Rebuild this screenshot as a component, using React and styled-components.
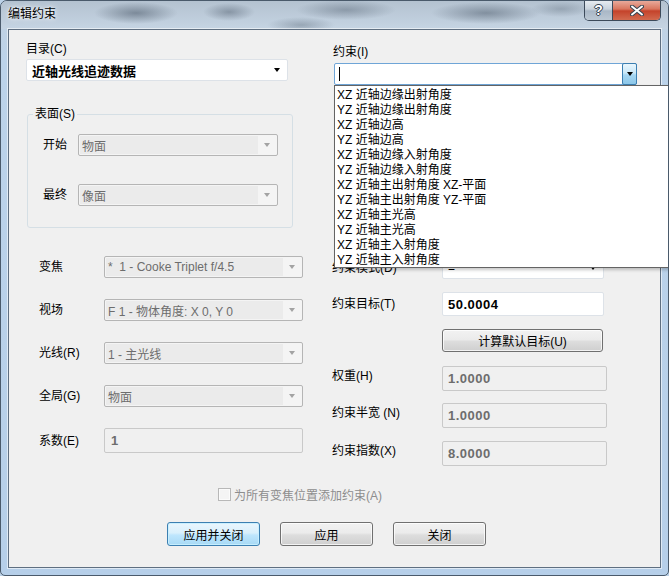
import React from 'react';
import styled, { createGlobalStyle } from 'styled-components';

const uiFont = `"Liberation Sans", "Noto Sans CJK SC", sans-serif`;

const GlobalStyle = createGlobalStyle`
  html, body {
    margin: 0;
    padding: 0;
    background: #bcd2e8;
  }
  body {
    font-family: ${uiFont};
    font-size: 12px;
  }
`;

// window chrome
const Frame = styled.div`
  width: 669px;
  height: 576px;
  box-sizing: border-box;
  border: 1px solid #4a5a6b;
  border-radius: 7px 7px 5px 5px;
  overflow: hidden;
  display: flex;
  flex-direction: column;
  background: linear-gradient(180deg, #c3d1df 0, #bcd3ea 60px, #b6cfe9 100%);
`;

const TitleBar = styled.div`
  flex: none;
  height: 28px;
  padding: 0 7px;
  display: flex;
  justify-content: space-between;
  align-items: flex-start;
  background:
    radial-gradient(42px 11px at 135px 12px, rgba(72, 86, 102, 0.55), transparent),
    radial-gradient(26px 9px at 228px 11px, rgba(72, 86, 102, 0.45), transparent),
    radial-gradient(50px 10px at 345px 9px, rgba(72, 86, 102, 0.4), transparent),
    radial-gradient(34px 8px at 300px 24px, rgba(72, 86, 102, 0.35), transparent),
    radial-gradient(55px 11px at 485px 12px, rgba(72, 86, 102, 0.5), transparent),
    radial-gradient(30px 8px at 560px 8px, rgba(72, 86, 102, 0.3), transparent),
    linear-gradient(180deg, #b4c2d0, #c5d4e3);
`;

const Title = styled.div`
  padding-top: 6px;
  line-height: 14px;
  font-size: 12px;
  color: #000;
  text-shadow: 0 0 6px rgba(255, 255, 255, 0.95), 0 0 3px rgba(255, 255, 255, 0.9);
`;

const CaptionGroup = styled.div`
  display: flex;
  margin-top: -1px;
  border: 1px solid #3c4a5a;
  border-top: none;
  border-radius: 0 0 5px 5px;
  overflow: hidden;
`;

const CaptionButton = styled.div`
  width: ${p => p.$w}px;
  height: 20px;
  box-sizing: border-box;
  display: flex;
  align-items: center;
  justify-content: center;
  border-left: ${p => (p.$close ? '1px solid #3c4a5a' : 'none')};
  background: ${p =>
    p.$close
      ? 'linear-gradient(180deg, #eab0a2 0, #d9765f 45%, #c4432b 55%, #d26a4f 100%)'
      : 'linear-gradient(180deg, #e9eef3 0, #c9d3dd 45%, #a9b7c6 55%, #bcc8d4 100%)'};
  color: #fff;
  font-weight: bold;
  font-size: 14px;
  text-shadow: 0 0 1px #2c3a48, 1px 0 0 #3a4856, -1px 0 0 #3a4856, 0 1px 0 #3a4856, 0 -1px 0 #3a4856;
`;

const Client = styled.div`
  position: relative;
  flex: 1;
  margin: 0 7px 7px;
  background: #f0f0f0;
  border: 1px solid #5f6f81;
  box-shadow: 0 0 0 1px rgba(255, 255, 255, 0.55);
  font-family: ${uiFont};
  font-size: 12px;
  color: #000;
`;

// layout
const Columns = styled.div`
  display: flex;
  align-items: flex-start;
  padding-left: 17px;
`;

const LeftCol = styled.div`
  width: 279px;
  display: flex;
  flex-direction: column;
`;

const RightCol = styled.div`
  width: 306px;
  margin-left: 27px;
  display: flex;
  flex-direction: column;
`;

const Caption = styled.div`
  line-height: 14px;
  margin-top: ${p => p.$mt || 0}px;
  margin-left: ${p => p.$ml || 0}px;
`;

const Row = styled.div`
  display: flex;
  align-items: ${p => (p.$top ? 'flex-start' : 'center')};
  margin-top: ${p => p.$mt || 0}px;
  padding-left: ${p => p.$pl || 0}px;
`;

const RowLabel = styled.span`
  flex: none;
  width: ${p => p.$w}px;
  line-height: ${p => (p.$top ? 20 : 14)}px;
  white-space: nowrap;
`;

const RowStack = styled.div`
  display: flex;
  flex-direction: column;
  gap: 21px;
  margin-top: 28px;
`;

const GroupBox = styled.div`
  position: relative;
  box-sizing: border-box;
  width: 266px;
  height: 114px;
  margin: 33px 0 0 1px;
  padding: 19px 0 0 15px;
  border: 1px solid #d5dfe5;
  border-radius: 3px;
  display: flex;
  flex-direction: column;
  gap: 28px;
`;

const Legend = styled.span`
  position: absolute;
  left: 5px;
  top: -8px;
  padding: 0 2px;
  line-height: 14px;
  background: #f0f0f0;
`;

// combo boxes
const ComboShell = styled.div`
  box-sizing: border-box;
  width: ${p => p.$w}px;
  height: 22px;
  margin-left: ${p => p.$ml || 0}px;
  padding: 1px;
  display: flex;
  border: 1px solid ${p => (p.$disabled ? '#b5b5b5' : p.$focus ? '#6fa5d7' : '#dde2e8')};
  border-radius: 2px;
  background: ${p => (p.$disabled ? '#f4f4f4' : '#fff')};
`;

const ComboText = styled.div`
  flex: 1;
  display: flex;
  align-items: center;
  padding-left: ${p => p.$pl ?? 2}px;
  background: ${p => (p.$disabled ? '#ebebeb' : 'transparent')};
  color: ${p => (p.$disabled ? '#6d6d6d' : '#000')};
  font-weight: ${p => (p.$bold ? 'bold' : 'normal')};
  font-size: ${p => (p.$bold ? 13 : 12)}px;
  white-space: pre;
  overflow: hidden;
`;

const ArrowBox = styled.div`
  flex: none;
  width: ${p => (p.$button ? 15 : 18)}px;
  box-sizing: border-box;
  display: flex;
  align-items: center;
  justify-content: center;
  ${p =>
    p.$button &&
    `
    margin: -2px -2px -2px 0;
    border: 1px solid #3c7fb1;
    border-radius: 2px;
    background: linear-gradient(180deg, #eaf6fd 0, #c9e8f8 45%, #a5d6f2 55%, #8cc7e9 100%);
  `}
`;

const Arrow = styled.span`
  width: 0;
  height: 0;
  border-left: 3.5px solid transparent;
  border-right: 3.5px solid transparent;
  border-top: 4px solid ${p => (p.$disabled ? '#a3a3a3' : '#000')};
`;

const Caret = styled.span`
  width: 1px;
  height: 14px;
  background: #000;
`;

// text boxes
const TextBox = styled.div`
  box-sizing: border-box;
  width: ${p => p.$w}px;
  height: ${p => p.$h}px;
  padding-left: ${p => p.$pl || 5}px;
  display: flex;
  align-items: center;
  border: 1px solid ${p => (p.$disabled ? '#c9c9c9' : '#dde2e8')};
  border-radius: 2px;
  background: ${p => (p.$disabled ? '#f0f0f0' : '#fff')};
  color: ${p => (p.$disabled ? '#6d6d6d' : '#000')};
  font-weight: bold;
  font-size: 13px;
  letter-spacing: 0.5px;
`;

// buttons
const Button = styled.div`
  box-sizing: border-box;
  width: ${p => p.$w}px;
  height: ${p => p.$h}px;
  margin-top: ${p => p.$mt || 0}px;
  display: flex;
  align-items: center;
  justify-content: center;
  border: 1px solid ${p => (p.$default ? '#3c7fb1' : '#707070')};
  border-radius: 3px;
  box-shadow: inset 0 0 0 1px ${p => (p.$default ? 'rgba(200,240,255,0.9)' : 'rgba(255,255,255,0.75)')};
  background: ${p =>
    p.$default
      ? 'linear-gradient(180deg, #eaf6fd 0, #d9f0fc 45%, #bee6fd 55%, #a7d9f5 100%)'
      : 'linear-gradient(180deg, #f2f2f2 0, #ebebeb 45%, #dddddd 55%, #cfcfcf 100%)'};
  font-size: 12px;
`;

const ButtonRow = styled.div`
  display: flex;
  gap: 20px;
  margin-top: 21px;
  padding-left: 158px;
`;

// checkbox
const CheckRow = styled.label`
  display: flex;
  align-items: center;
  gap: 3px;
  margin-top: 21px;
  padding-left: 209px;
  height: 14px;
  color: #8d8d8d;
`;

const CheckBox = styled.span`
  width: 13px;
  height: 13px;
  box-sizing: border-box;
  border: 1px solid #b8b8b8;
  background: #f4f4f4;
  box-shadow: inset 0 0 0 1px #fbfbfb;
`;

// the open drop-down list, lying over the form
const DropList = styled.ul`
  position: absolute;
  left: 325px;
  top: 55px;
  z-index: 2;
  width: 335px;
  height: 183px;
  box-sizing: border-box;
  margin: 0;
  padding: 2px 0 0;
  list-style: none;
  overflow: hidden;
  background: #fff;
  border: 1px solid #646464;
  box-shadow: 2px 2px 3px rgba(0, 0, 0, 0.22);
`;

const DropItem = styled.li`
  height: 15px;
  line-height: 15px;
  padding-left: 2px;
  white-space: nowrap;
`;

const listItems = [
  'XZ 近轴边缘出射角度',
  'YZ 近轴边缘出射角度',
  'XZ 近轴边高',
  'YZ 近轴边高',
  'XZ 近轴边缘入射角度',
  'YZ 近轴边缘入射角度',
  'XZ 近轴主出射角度 XZ-平面',
  'YZ 近轴主出射角度 YZ-平面',
  'XZ 近轴主光高',
  'YZ 近轴主光高',
  'XZ 近轴主入射角度',
  'YZ 近轴主入射角度',
];

const leftRows = [
  { label: '变焦', value: '*  1 - Cooke Triplet f/4.5' },
  { label: '视场', value: 'F 1 - 物体角度: X 0, Y 0' },
  { label: '光线(R)', value: '1 - 主光线' },
  { label: '全局(G)', value: '物面' },
];

const disabledRows = [
  { label: '权重(H)', value: '1.0000', mt: 14 },
  { label: '约束半宽 (N)', value: '1.0000', mt: 12 },
  { label: '约束指数(X)', value: '8.0000', mt: 13 },
];

const DisabledCombo = ({ value, w }) => (
  <ComboShell $w={w} $disabled>
    <ComboText $disabled>{value}</ComboText>
    <ArrowBox>
      <Arrow $disabled />
    </ArrowBox>
  </ComboShell>
);

const CloseGlyph = () => (
  <svg width="14" height="11" viewBox="0 0 14 11">
    <path d="M2 1.5 L12 9.5 M12 1.5 L2 9.5" stroke="#3a4552" strokeWidth="4" strokeLinecap="round" />
    <path d="M2 1.5 L12 9.5 M12 1.5 L2 9.5" stroke="#fff" strokeWidth="2" strokeLinecap="round" />
  </svg>
);

const App = () => {
  return (
    <>
      <GlobalStyle />
      <Frame>
        <TitleBar>
          <Title>编辑约束</Title>
          <CaptionGroup>
            <CaptionButton $w={27}>?</CaptionButton>
            <CaptionButton $w={48} $close>
              <CloseGlyph />
            </CaptionButton>
          </CaptionGroup>
        </TitleBar>

        <Client>
          <Columns>
            <LeftCol>
              <Caption $mt={12}>目录(C)</Caption>
              <Row $mt={3}>
                <ComboShell $w={262}>
                  <ComboText $bold $pl={4}>近轴光线追迹数据</ComboText>
                  <ArrowBox>
                    <Arrow />
                  </ArrowBox>
                </ComboShell>
              </Row>

              <GroupBox>
                <Legend>表面(S)</Legend>
                <Row>
                  <RowLabel $w={35}>开始</RowLabel>
                  <DisabledCombo w={200} value="物面" />
                </Row>
                <Row>
                  <RowLabel $w={35}>最终</RowLabel>
                  <DisabledCombo w={200} value="像面" />
                </Row>
              </GroupBox>

              <RowStack>
                {leftRows.map(r => (
                  <Row key={r.label} $pl={13}>
                    <RowLabel $w={65}>{r.label}</RowLabel>
                    <DisabledCombo w={199} value={r.value} />
                  </Row>
                ))}
                <Row $pl={13}>
                  <RowLabel $w={65}>系数(E)</RowLabel>
                  <TextBox $w={199} $h={25} $pl={6} $disabled>
                    1
                  </TextBox>
                </Row>
              </RowStack>
            </LeftCol>

            <RightCol>
              <Caption $mt={15} $ml={1}>
                约束(I)
              </Caption>
              <Row $mt={4}>
                <ComboShell $w={303} $ml={2} $focus>
                  <ComboText $pl={3}>
                    <Caret />
                  </ComboText>
                  <ArrowBox $button>
                    <Arrow />
                  </ArrowBox>
                </ComboShell>
              </Row>

              <Row $mt={172}>
                <RowLabel $w={110}>约束模式(D)</RowLabel>
                <ComboShell $w={162}>
                  <ComboText $pl={4}>=</ComboText>
                  <ArrowBox>
                    <Arrow />
                  </ArrowBox>
                </ComboShell>
              </Row>

              <Row $mt={13}>
                <RowLabel $w={110}>约束目标(T)</RowLabel>
                <TextBox $w={162} $h={24} $pl={5}>
                  50.0004
                </TextBox>
              </Row>

              <Row $mt={13} $pl={110}>
                <Button $w={161} $h={23}>
                  计算默认目标(U)
                </Button>
              </Row>

              {disabledRows.map(r => (
                <Row key={r.label} $mt={r.mt} $top>
                  <RowLabel $w={110} $top>
                    {r.label}
                  </RowLabel>
                  <TextBox $w={165} $h={25} $disabled>
                    {r.value}
                  </TextBox>
                </Row>
              ))}
            </RightCol>
          </Columns>

          <CheckRow>
            <CheckBox />
            为所有变焦位置添加约束(A)
          </CheckRow>

          <ButtonRow>
            <Button $w={93} $h={24} $default>
              应用并关闭
            </Button>
            <Button $w={93} $h={24}>
              应用
            </Button>
            <Button $w={93} $h={24}>
              关闭
            </Button>
          </ButtonRow>

          <DropList>
            {listItems.map(item => (
              <DropItem key={item}>{item}</DropItem>
            ))}
          </DropList>
        </Client>
      </Frame>
    </>
  );
};

export default App;
